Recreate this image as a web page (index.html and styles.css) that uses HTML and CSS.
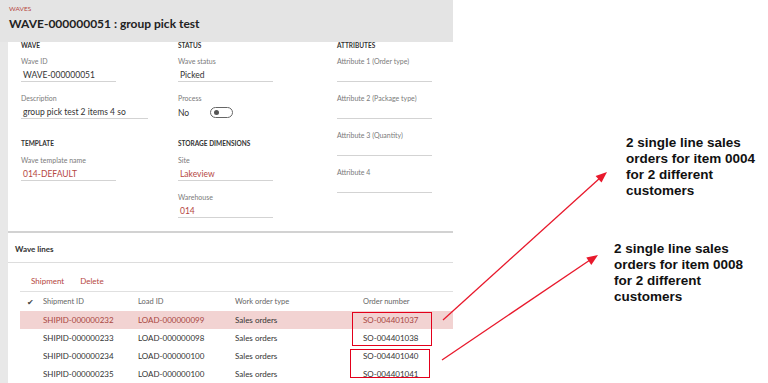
FILE: index.html
```html
<!DOCTYPE html>
<html>
<head>
<meta charset="utf-8">
<link rel="stylesheet" href="styles.css">
</head>
<body>
<div class="page">
  <div class="app">
    <div class="header">
      <div class="crumb">WAVES</div>
      <div class="title">WAVE-000000051 : group pick test</div>
    </div>
    <div class="body">
      <div class="strip"></div>
      <div class="main">
        <div class="card">
          <div class="col">
            <div class="group-head">WAVE</div>
            <div class="field"><div class="label">Wave ID</div><div class="value">WAVE-000000051</div></div>
            <div class="field wide"><div class="label">Description</div><div class="value">group pick test 2 items 4 so</div></div>
            <div class="group-head next">TEMPLATE</div>
            <div class="field"><div class="label">Wave template name</div><div class="value link">014-DEFAULT</div></div>
          </div>
          <div class="col">
            <div class="group-head">STATUS</div>
            <div class="field"><div class="label">Wave status</div><div class="value">Picked</div></div>
            <div class="field"><div class="label">Process</div><div class="value plain"><span class="no">No</span><span class="toggle"><span class="knob"></span></span></div></div>
            <div class="group-head next">STORAGE DIMENSIONS</div>
            <div class="field"><div class="label">Site</div><div class="value link">Lakeview</div></div>
            <div class="field"><div class="label">Warehouse</div><div class="value link">014</div></div>
          </div>
          <div class="col">
            <div class="group-head">ATTRIBUTES</div>
            <div class="field"><div class="label">Attribute 1 (Order type)</div><div class="value"></div></div>
            <div class="field"><div class="label">Attribute 2 (Package type)</div><div class="value"></div></div>
            <div class="field"><div class="label">Attribute 3 (Quantity)</div><div class="value"></div></div>
            <div class="field"><div class="label">Attribute 4</div><div class="value"></div></div>
          </div>
        </div>
        <div class="section-head">Wave lines</div>
        <div class="toolbar"><span class="action">Shipment</span><span class="action">Delete</span></div>
        <div class="grid-wrap">
          <div class="row head">
            <span class="check">&#10004;</span><span>Shipment ID</span><span>Load ID</span><span>Work order type</span><span>Order number</span>
          </div>
          <div class="row selected">
            <span></span><span class="red">SHIPID-000000232</span><span class="red">LOAD-000000099</span><span>Sales orders</span><span class="red">SO-004401037</span>
          </div>
          <div class="row">
            <span></span><span>SHIPID-000000233</span><span>LOAD-000000098</span><span>Sales orders</span><span>SO-004401038</span>
          </div>
          <div class="row">
            <span></span><span>SHIPID-000000234</span><span>LOAD-000000100</span><span>Sales orders</span><span>SO-004401040</span>
          </div>
          <div class="row">
            <span></span><span>SHIPID-000000235</span><span>LOAD-000000100</span><span>Sales orders</span><span>SO-004401041</span>
          </div>
          <div class="mark mark-a"></div>
          <div class="mark mark-b"></div>
        </div>
      </div>
    </div>
  </div>
  <div class="notes">
    <div class="note note-a">2 single line sales<br>orders for item 0004<br>for 2 different<br>customers</div>
    <div class="note note-b">2 single line sales<br>orders for item 0008<br>for 2 different<br>customers</div>
  </div>
  <svg class="arrows" width="768" height="383" viewBox="0 0 768 383">
    <line x1="443" y1="320" x2="600" y2="178" stroke="#e8192c" stroke-width="1.3"/>
    <polygon points="607,172 601.5,182.6 595.6,176.1" fill="#e8192c"/>
    <line x1="442" y1="360" x2="590" y2="260" stroke="#e8192c" stroke-width="1.3"/>
    <polygon points="598,255 591.3,264.9 586.3,257.5" fill="#e8192c"/>
  </svg>
</div>
</body>
</html>
```

FILE: styles.css
```css
* { box-sizing: border-box; }
html, body { margin: 0; padding: 0; background: #ffffff; }
body { font-family: Lato, "Open Sans", sans-serif; color: #333333; }

.page {
  position: relative;
  width: 768px;
  height: 383px;
  overflow: hidden;
  display: flex;
}

.app {
  width: 453px;
  display: flex;
  flex-direction: column;
}

.header {
  height: 43px;
  background: #e4e4e4;
  padding: 5px 0 0 9px;
}
.crumb {
  font-size: 6.5px;
  line-height: 8px;
  color: #b5473f;
}
.title {
  margin-top: 3px;
  font-size: 12px;
  line-height: 16px;
  font-weight: 700;
  color: #222222;
}

.body {
  flex: 1;
  display: flex;
}
.strip {
  width: 8px;
  background: #e8e8e8;
}
.main {
  flex: 1;
  display: flex;
  flex-direction: column;
}

.card {
  height: 191px;
  flex-shrink: 0;
  padding-left: 13px;
  display: grid;
  grid-template-columns: 157px 159px 96px;
  border-bottom: 2px solid #d2d2d2;
}
.col {
  display: flex;
  flex-direction: column;
}
.group-head {
  font-size: 6.5px;
  line-height: 8px;
  font-weight: 700;
  color: #333333;
  margin-bottom: 6px;
}
.group-head.next { margin-top: 10px; margin-bottom: 7px; }

.field {
  width: 95px;
  margin-bottom: 11px;
}
.field.wide { width: 127px; }
.label {
  font-size: 7px;
  line-height: 10px;
  color: #7a7a7a;
}
.value {
  margin-top: 3px;
  height: 13px;
  padding-left: 2px;
  font-size: 8.5px;
  line-height: 12px;
  color: #333333;
  border-bottom: 1px solid #d3d3d3;
}
.value.link { color: #b5473f; padding-left: 2px; }
.value.plain {
  border-bottom: none;
  padding-left: 0;
  display: flex;
  align-items: center;
}
.no { width: 32px; }
.toggle {
  width: 23px;
  height: 11px;
  border: 1px solid #666666;
  border-radius: 6px;
  display: flex;
  align-items: center;
  padding-left: 3px;
}
.knob {
  width: 5px;
  height: 5px;
  border-radius: 50%;
  background: #555555;
}

.section-head {
  height: 30px;
  flex-shrink: 0;
  padding: 10px 0 0 7px;
  font-size: 8px;
  line-height: 12px;
  font-weight: 700;
  color: #333333;
  border-bottom: 1px solid #dddddd;
}

.toolbar {
  height: 28px;
  flex-shrink: 0;
  padding: 12px 0 0 23px;
  display: flex;
  gap: 16px;
  font-size: 8px;
  line-height: 12px;
  color: #b5473f;
}

.grid-wrap {
  position: relative;
  margin-left: 12px;
  border-top: 1px solid #e0e0e0;
}
.row {
  display: grid;
  grid-template-columns: 23px 95px 97px 128px 1fr;
  height: 18px;
  align-items: center;
  font-size: 8px;
  color: #333333;
}
.row.head {
  height: 19px;
  font-size: 7.5px;
  color: #666666;
}
.check {
  padding-left: 7px;
  font-size: 8px;
  color: #444444;
}
.row.selected { background: #f2d3d2; }
.red { color: #a8463f; }

.mark {
  position: absolute;
  border: 1.5px solid #e3001b;
}
.mark-a { left: 332px; top: 20px; width: 80px; height: 34px; }
.mark-b { left: 330px; top: 57px; width: 80px; height: 29px; }

.notes {
  flex: 1;
  display: flex;
  flex-direction: column;
  padding-top: 135px;
}
.note {
  font-family: "Liberation Sans", Arial, sans-serif;
  font-weight: 700;
  font-size: 13.5px;
  line-height: 16px;
  color: #111111;
}
.note-a { margin-left: 173px; }
.note-b { margin-left: 161px; margin-top: 42px; }

.arrows {
  position: absolute;
  left: 0;
  top: 0;
  pointer-events: none;
}
```
